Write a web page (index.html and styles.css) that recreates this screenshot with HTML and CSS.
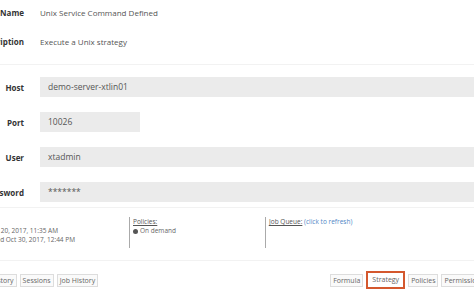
FILE: index.html
```html
<!DOCTYPE html>
<html lang="en">
<head>
    <meta charset="UTF-8">
    <meta name="viewport" content="width=device-width, initial-scale=1.0">
    <title>Unix Service Command Defined</title>
    <link rel="stylesheet" href="styles.css">
</head>
<body>
    <div class="page">
        <!-- Name / description -->
        <div class="meta">
            <div class="row">
                <div class="label">Name</div>
                <div class="value">Unix Service Command Defined</div>
            </div>
            <div class="row">
                <div class="label">Description</div>
                <div class="value">Execute a Unix strategy</div>
            </div>
        </div>

        <!-- Strategy fields -->
        <div class="fields">
            <div class="row">
                <div class="label">Host</div>
                <div class="input">demo-server-xtlin01</div>
            </div>
            <div class="row">
                <div class="label">Port</div>
                <div class="input short">10026</div>
            </div>
            <div class="row">
                <div class="label">User</div>
                <div class="input">xtadmin</div>
            </div>
            <div class="row">
                <div class="label">Password</div>
                <div class="input">*******</div>
            </div>
        </div>

        <!-- Info strip -->
        <div class="info">
            <div class="col dates">
                <div>Created Oct 20, 2017, 11:35 AM</div>
                <div>Last modified Oct 30, 2017, 12:44 PM</div>
            </div>
            <div class="col bordered">
                <div class="heading">Policies:</div>
                <div><span class="dot"></span>On demand</div>
            </div>
            <div class="col bordered">
                <span class="heading">Job Queue:</span> <a class="link">(click to refresh)</a>
            </div>
        </div>

        <!-- Tabs -->
        <div class="tabs">
            <div class="tab-group">
                <div class="tab">Details</div>
                <div class="tab">History</div>
                <div class="tab">Sessions</div>
                <div class="tab">Job History</div>
            </div>
            <div class="tab-group">
                <div class="tab">Formula</div>
                <div class="tab active">Strategy</div>
                <div class="tab">Policies</div>
                <div class="tab">Permissions</div>
            </div>
        </div>
    </div>
</body>
</html>
```

FILE: styles.css
```css
body {
    margin: 0;
    padding: 0;
    background: #ffffff;
    font-family: "Open Sans", "DejaVu Sans", sans-serif;
    color: #555;
    overflow: hidden;
}

.page {
    width: 531px;
    margin-left: -44px;
}

.row {
    display: grid;
    grid-template-columns: 68px 1fr;
    column-gap: 16px;
    align-items: center;
}

.label {
    text-align: right;
    font-weight: bold;
    font-size: 8px;
    color: #333;
    white-space: nowrap;
}

.value {
    font-size: 8px;
    color: #555;
}

/* Name / description */
.meta {
    display: flex;
    flex-direction: column;
    gap: 17px;
    padding: 7px 0 16px;
    line-height: 12px;
    border-bottom: 1px solid #f2f2f2;
}

/* Fields */
.fields {
    display: flex;
    flex-direction: column;
    gap: 15px;
    padding: 12px 0 5px;
    border-bottom: 1px solid #f2f2f2;
}

.input {
    height: 20px;
    line-height: 20px;
    padding-left: 8px;
    background: #ebebeb;
    font-size: 8.5px;
    color: #555;
    box-sizing: border-box;
}

.input.short {
    width: 100px;
}

/* Info strip */
.info {
    display: grid;
    grid-template-columns: 173px 136px 1fr;
    padding: 9px 0 12px;
    font-size: 6.5px;
    line-height: 9px;
    color: #666;
    border-bottom: 1px solid #f2f2f2;
}

.col {
    height: 31px;
    box-sizing: border-box;
    white-space: nowrap;
}

.dates {
    padding: 9px 0 0 7px;
}

.bordered {
    border-left: 1px solid #aaa;
    padding-left: 3px;
}

.heading {
    text-decoration: underline;
    color: #555;
}

.dot {
    display: inline-block;
    width: 5px;
    height: 5px;
    border-radius: 50%;
    background: #555;
    margin-right: 2px;
    vertical-align: -0.5px;
}

.link {
    color: #4f86c6;
}

/* Tabs */
.tabs {
    display: flex;
    justify-content: space-between;
    align-items: center;
    margin-top: 10px;
}

.tab-group {
    display: flex;
    align-items: center;
    gap: 3px;
}

.tab {
    height: 13px;
    line-height: 11px;
    padding: 0 2px;
    border: 1px solid #ddd;
    background: #fafafa;
    font-size: 7px;
    color: #666;
    box-sizing: border-box;
    white-space: nowrap;
}

.tab.active {
    height: 18px;
    line-height: 14px;
    padding: 0 4px;
    border: 2px solid #d4582e;
    background: #fff;
}
```
